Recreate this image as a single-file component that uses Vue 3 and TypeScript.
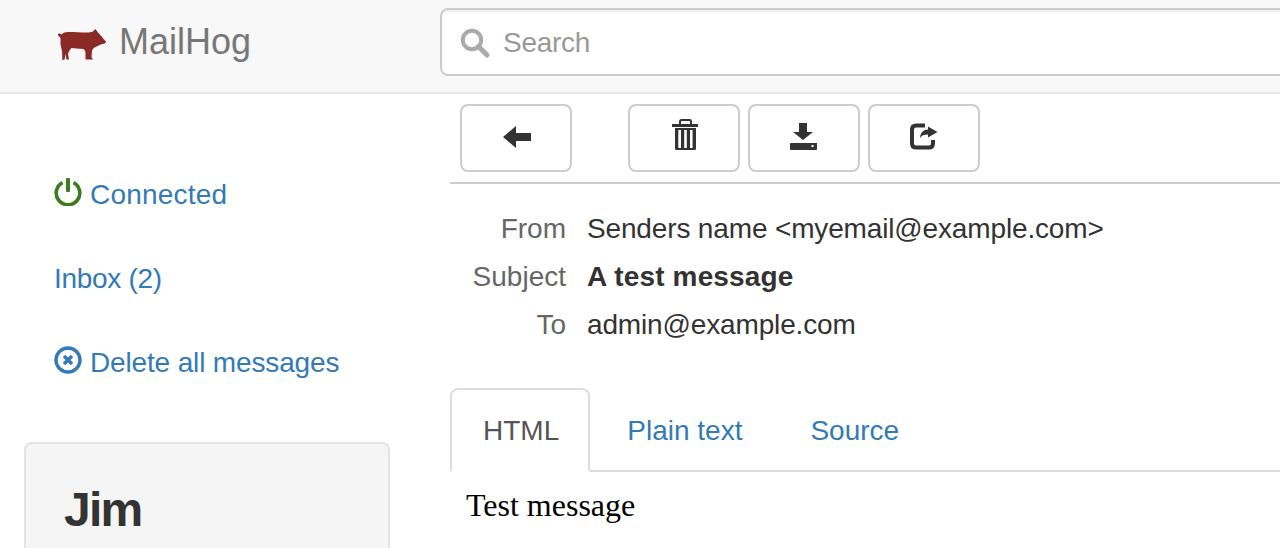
<template>
  <div class="page">
    <header class="navbar">
      <a class="brand">
        <svg class="pig" width="50" height="32" viewBox="0 0 50 32">
          <path d="M1.2 4.8C2 4 3.5 4.5 4.5 5.5C6 3.5 9 2.8 12 3C17 3 24 3.5 30 3.6C32 3.6 34 3.2 35.5 2.8L38.5 0L41 3.5C43 5.5 45.5 8.5 47 10.5L49 12.5C49 14 47.5 15 45.5 15C43.5 15.5 41 17 38.5 18C36.5 19 35.5 20 35 22L34.5 28L36 30.5H28.5L28.5 24C28.5 22 27.5 20.5 26 20C22 19.8 17 19.5 14.5 19C13 20.5 11.5 23 11 25L12 30.5H9.5L8.6 25L7.6 30.5L5.2 31L5.2 24C5 21 3.8 18 3.5 15C3.5 12 3.8 9.5 3 8C1.5 7.5 .5 6 1.2 4.8Z" />
        </svg>
        <span>MailHog</span>
      </a>
      <div class="search">
        <svg width="32" height="32" viewBox="0 0 32 32">
          <circle cx="13" cy="13" r="9.2" fill="none" stroke="#aaa" stroke-width="4" />
          <path d="M19.5 19.5L28 28" stroke="#aaa" stroke-width="5" stroke-linecap="round" />
        </svg>
        <input type="text" placeholder="Search" />
      </div>
    </header>

    <div class="content">
      <aside class="sidebar">
        <nav class="side-nav">
          <a class="wide">
            <svg width="28" height="28" viewBox="0 0 28 28" class="green">
              <path d="M8.5 4.6A11.8 11.8 0 1 0 19.5 4.6" fill="none" stroke="currentColor" stroke-width="3.6" />
              <rect x="12" y="0" width="4" height="14" rx="1" fill="currentColor" />
            </svg>
            <span>Connected</span>
          </a>
          <a class="tight"><span>Inbox (2)</span></a>
          <a class="narrow">
            <svg width="28" height="28" viewBox="0 0 28 28">
              <circle cx="14" cy="14" r="12" fill="none" stroke="currentColor" stroke-width="3.4" />
              <path d="M10 10L18 18M18 10L10 18" stroke="currentColor" stroke-width="3.6" />
            </svg>
            <span>Delete all messages</span>
          </a>
        </nav>
        <div class="well">
          <h3>Jim</h3>
        </div>
      </aside>

      <main class="message">
        <div class="toolbar">
          <button class="back">
            <svg width="40" height="40" viewBox="0 0 40 40"><path d="M7 19L20 8V15H35V23H20V30Z" /></svg>
          </button>
          <button>
            <svg width="40" height="40" viewBox="0 0 40 40">
              <path fill-rule="evenodd" d="M8 6H15V3.5Q15 1 17.5 1H25.5Q28 1 28 3.5V6H34V9H8ZM17 6H26V3.4Q26 3 25.5 3H17.5Q17 3 17 3.4ZM11 10H32V30.5Q32 32 30.5 32H12.5Q11 32 11 30.5ZM14.3 12V30H17V12ZM20.2 12V30H22.8V12ZM26 12V30H28.6V12Z" />
            </svg>
          </button>
          <button>
            <svg width="40" height="40" viewBox="0 0 40 40">
              <path fill-rule="evenodd" d="M15 5H23V14H29L19 22L9 14H15ZM7 25H33V31Q33 32 32 32H7Q6 32 6 31V26Q6 25 7 25ZM27.5 27V29H29.5V27Z" />
            </svg>
          </button>
          <button>
            <svg width="40" height="40" viewBox="0 0 40 40">
              <path d="M21 7.5H12Q8 7.5 8 11.5V25.5Q8 29.5 12 29.5H25Q29 29.5 29 25.5V22" fill="none" stroke="currentColor" stroke-width="4" />
              <path d="M24 8.5L33.5 14L24 19.5V16.5C20 16.5 17.5 17.5 16 20C16.5 14.5 19.5 11.5 24 11.5Z" />
            </svg>
          </button>
        </div>
        <div class="rule"></div>

        <div class="headers">
          <div class="header-row" v-for="row in headers" :key="row.label">
            <span class="label">{{ row.label }}</span>
            <span class="value" :class="{ strong: row.strong }">{{ row.value }}</span>
          </div>
        </div>

        <ul class="tabs">
          <li v-for="tab in tabs" :key="tab" :class="{ active: tab === activeTab }">{{ tab }}</li>
        </ul>
        <div class="body-text">Test message</div>
      </main>
    </div>
  </div>
</template>

<script setup lang="ts">
import { ref } from 'vue'

const headers = [
  { label: 'From', value: 'Senders name <myemail@example.com>', strong: false },
  { label: 'Subject', value: 'A test message', strong: true },
  { label: 'To', value: 'admin@example.com', strong: false },
]

const tabs = ['HTML', 'Plain text', 'Source']
const activeTab = ref('HTML')
</script>

<style>
html, body {
  margin: 0;
  overflow: hidden;
  background: #fff;
}
</style>

<style scoped>
.page {
  width: 1280px;
  height: 548px;
  overflow: hidden;
  font-family: "Liberation Sans", Arial, sans-serif;
  font-size: 28px;
  line-height: 40px;
  color: #333;
}

.navbar {
  display: flex;
  align-items: flex-start;
  height: 92px;
  background: #f8f8f8;
  border-bottom: 2px solid #e7e7e7;
}

.brand {
  display: flex;
  align-items: center;
  gap: 12px;
  width: 440px;
  flex: none;
  box-sizing: border-box;
  padding: 22px 0 0 57px;
  font-size: 36px;
  color: #777;
}

.pig {
  fill: #8a2a27;
  flex: none;
  margin-top: 5px;
}

.search {
  display: flex;
  align-items: center;
  gap: 12px;
  flex: none;
  width: 900px;
  height: 68px;
  margin-top: 8px;
  box-sizing: border-box;
  padding-left: 17px;
  background: #fff;
  border: 2px solid #ccc;
  border-radius: 8px;
  box-shadow: inset 0 2px 2px rgba(0, 0, 0, .075);
}

.search svg {
  flex: none;
  margin-top: 2px;
}

.search input {
  flex: 1;
  border: 0;
  outline: 0;
  padding: 2px 0 0;
  background: transparent;
  font: inherit;
  letter-spacing: -.3px;
  color: #555;
}

.search input::placeholder {
  color: #999;
  opacity: 1;
}

.content {
  display: flex;
}

.sidebar {
  flex: none;
  width: 450px;
  padding-top: 79px;
  box-sizing: border-box;
}

.side-nav {
  display: flex;
  flex-direction: column;
  gap: 42px;
  padding-left: 54px;
}

.side-nav a {
  display: flex;
  align-items: center;
  gap: 8px;
  color: #337ab7;
}

.side-nav span {
  padding-top: 2px;
}

.side-nav .wide {
  letter-spacing: .2px;
}

.side-nav .tight {
  letter-spacing: -.3px;
}

.side-nav .narrow {
  letter-spacing: -.15px;
}

.side-nav svg {
  flex: none;
  margin-top: -5px;
}

.green {
  color: #3c7d1e;
}

.well {
  width: 366px;
  height: 200px;
  box-sizing: border-box;
  margin: 59px 0 0 24px;
  padding: 40px 38px;
  background: #f5f5f5;
  border: 2px solid #e3e3e3;
  border-radius: 8px;
}

.well h3 {
  margin: 0;
  font-size: 48px;
  line-height: 52px;
  font-weight: 700;
  letter-spacing: -1.8px;
  color: #333;
}

.message {
  flex: 1;
  min-width: 0;
}

.toolbar {
  display: flex;
  gap: 8px;
  padding: 10px 0 10px 10px;
}

.toolbar button {
  display: flex;
  align-items: center;
  justify-content: center;
  width: 112px;
  height: 68px;
  padding: 0;
  background: #fff;
  border: 2px solid #ccc;
  border-radius: 8px;
  color: #333;
}

.toolbar button svg {
  fill: #333;
  flex: none;
}

.toolbar .back {
  margin-right: 48px;
}

.rule {
  height: 2px;
  background: #ccc;
}

.headers {
  margin-top: 21px;
}

.header-row {
  display: flex;
  gap: 21px;
  height: 48px;
  line-height: 48px;
}

.label {
  width: 116px;
  text-align: right;
  color: #666;
}

.value {
  letter-spacing: -.15px;
}

.value.strong {
  font-weight: 700;
  letter-spacing: .15px;
}

.tabs {
  display: flex;
  gap: 4px;
  list-style: none;
  margin: 39px 0 0;
  padding: 0;
  border-bottom: 2px solid #ddd;
}

.tabs li {
  padding: 21px 29px 19px 31px;
  margin-bottom: -2px;
  border: 2px solid transparent;
  border-radius: 8px 8px 0 0;
  color: #337ab7;
}

.tabs li.active {
  color: #555;
  background: #fff;
  border-color: #ddd;
  border-bottom-color: #fff;
}

.body-text {
  padding: 15px 16px 0;
  font-family: "Liberation Serif", "Times New Roman", serif;
  font-size: 32px;
  line-height: 37px;
  color: #000;
}
</style>
